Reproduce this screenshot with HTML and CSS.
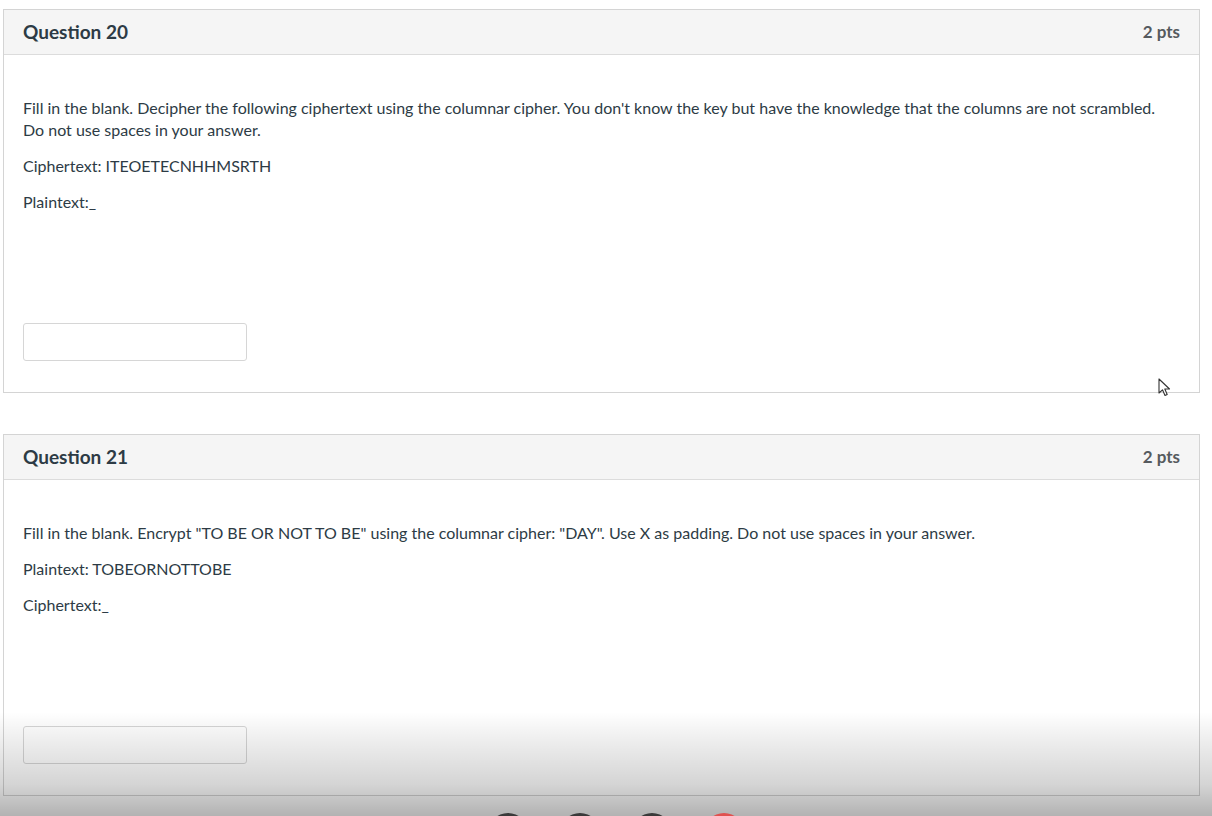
FILE: index.html
```html
<!DOCTYPE html>
<html>
<head>
<meta charset="utf-8">
<link rel="stylesheet" href="styles.css">
</head>
<body>
<div class="page">
  <div class="card">
    <div class="card-header">
      <span class="q-title">Question 20</span>
      <span class="q-pts">2 pts</span>
    </div>
    <div class="card-body">
      <p>Fill in the blank. Decipher the following ciphertext using the columnar cipher. You don't know the key but have the knowledge that the columns are not scrambled. Do not use spaces in your answer.</p>
      <p>Ciphertext: ITEOETECNHHMSRTH</p>
      <p>Plaintext:_</p>
      <div class="answer"><input class="answer-input" type="text"></div>
    </div>
  </div>
  <div class="card">
    <div class="card-header">
      <span class="q-title">Question 21</span>
      <span class="q-pts">2 pts</span>
    </div>
    <div class="card-body">
      <p>Fill in the blank. Encrypt "TO BE OR NOT TO BE" using the columnar cipher: "DAY". Use X as padding. Do not use spaces in your answer.</p>
      <p>Plaintext: TOBEORNOTTOBE</p>
      <p>Ciphertext:_</p>
      <div class="answer"><input class="answer-input" type="text"></div>
    </div>
  </div>
</div>
<div class="shade"></div>
<div class="controls">
  <span class="ctrl dark"></span>
  <span class="ctrl dark"></span>
  <span class="ctrl dark"></span>
  <span class="ctrl red"></span>
</div>
<svg class="cursor" width="14" height="20" viewBox="0 0 14 20">
  <path d="M1 1 L1 15 L4.5 11.8 L7 17.5 L9.2 16.5 L6.8 11 L11.5 11 Z" fill="#fff" stroke="#333" stroke-width="1.1" stroke-linejoin="round"/>
</svg>
</body>
</html>
```

FILE: styles.css
```css
html, body {
  margin: 0;
  padding: 0;
  background: #ffffff;
  height: 816px;
  overflow: hidden;
}
body {
  font-family: Lato, "Open Sans", sans-serif;
  color: #2d3b45;
  position: relative;
}
.page {
  padding: 9px 0 0 3px;
  width: 1197px;
  display: flex;
  flex-direction: column;
  gap: 41px;
}
.card {
  border: 1px solid #d4d4d4;
  background: #fff;
}
.card-header {
  height: 44px;
  background: #f5f5f5;
  border-bottom: 1px solid #dcdcdc;
  display: flex;
  align-items: center;
  justify-content: space-between;
  padding: 0 19px 2px 19px;
  box-sizing: border-box;
  height: 45px;
}
.q-title {
  font-weight: 700;
  font-size: 19px;
  color: #2d3b45;
}
.q-pts {
  font-weight: 700;
  font-size: 17px;
  color: #555a5e;
}
.card-body {
  padding: 42px 19px 31px 19px;
  font-size: 16px;
  line-height: 22px;
}
.card-body p {
  margin: 0 0 14px 0;
}
.answer {
  padding-top: 96px;
}
.answer-input {
  display: block;
  box-sizing: border-box;
  width: 224px;
  height: 38px;
  border: 1px solid #d6d6d6;
  border-radius: 3px;
  background: #fff;
  margin: 0;
}
.shade {
  position: absolute;
  left: 0;
  right: 0;
  top: 712px;
  height: 104px;
  background: linear-gradient(to bottom, rgba(0,0,0,0) 0%, rgba(0,0,0,0.05) 20%, rgba(0,0,0,0.17) 70%, rgba(0,0,0,0.3) 100%);
  pointer-events: none;
}
.controls {
  position: absolute;
  top: 813px;
  left: 488px;
  display: flex;
  gap: 32px;
}
.ctrl {
  width: 40px;
  height: 40px;
  border-radius: 50%;
  display: block;
}
.ctrl.dark { background: #3a3a3a; }
.ctrl.red { background: #e0514f; }
.cursor {
  position: absolute;
  left: 1158px;
  top: 378px;
}
```
